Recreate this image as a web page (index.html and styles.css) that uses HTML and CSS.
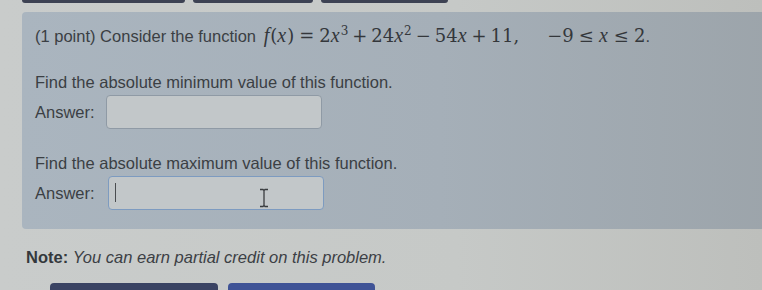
FILE: index.html
```html
<!DOCTYPE html>
<html>
<head>
    <title>Problem</title>
    <link rel="stylesheet" href="styles.css">
</head>
<body>
    <div class="tabs">
        <div class="tab tab-1"></div>
        <div class="tab tab-2"></div>
        <div class="tab tab-3"></div>
    </div>

    <div class="problem">
        <p class="intro">(1 point) Consider the function
            <span class="math"><i>f</i>(<i>x</i>)<span class="rel">=</span>2<i>x</i><sup>3</sup><span class="op">+</span>24<i>x</i><sup>2</sup><span class="op">−</span>54<i>x</i><span class="op">+</span>11,<span class="qquad"></span>−9<span class="rel">≤</span><i>x</i><span class="rel">≤</span>2</span>.</p>

        <p class="question">Find the absolute minimum value of this function.</p>
        <div class="answer">
            <span class="label">Answer:</span>
            <div class="field"></div>
        </div>

        <p class="question q2">Find the absolute maximum value of this function.</p>
        <div class="answer">
            <span class="label">Answer:</span>
            <div class="field focused">
                <span class="caret"></span>
                <svg class="ibeam" width="10" height="20" viewBox="0 0 10 20">
                    <path d="M1 1.5h3l1 1 1-1h3M5 2.5v15M1 18.5h3l1-1 1 1h3" fill="none" stroke="#3a3d40" stroke-width="1.3"/>
                </svg>
            </div>
        </div>
    </div>

    <p class="note"><b>Note:</b> <i>You can earn partial credit on this problem.</i></p>

    <div class="buttons">
        <div class="btn btn-dark"></div>
        <div class="btn btn-blue"></div>
    </div>
</body>
</html>
```

FILE: styles.css
```css
body {
    margin: 0;
    width: 762px;
    height: 290px;
    overflow: hidden;
    background: linear-gradient(90deg, #c9cccb, #c6c9c7 60%, #bdbfbc);
    font-family: "Liberation Sans", Arial, sans-serif;
    font-size: 16.5px;
    color: #3b3f44;
}
.tabs {
    display: flex;
    gap: 8px;
    padding-left: 22px;
    height: 3px;
}
.tab {
    height: 3px;
    background: #3d4253;
    border-radius: 0 0 3px 3px;
}
.tab-1 { width: 163px; }
.tab-2 { width: 120px; }
.tab-3 { width: 127px; }

.problem {
    margin: 9px -20px 0 22px;
    padding: 14px 13px 19px;
    background: linear-gradient(90deg, #aab5bf, #a5afb8 55%, #9ca4aa);
    border-radius: 4px 0 0 4px;
}
.problem p {
    margin: 0;
    line-height: 20px;
}
.math {
    font-family: "DejaVu Serif", "Liberation Serif", serif;
    font-size: 18px;
    line-height: 0;
    color: #34373b;
    margin-left: 3px;
}
.math i {
    font-family: "Liberation Serif", serif;
    font-size: 20px;
    margin-right: 1px;
}
.math sup {
    font-size: 12px;
    line-height: 0;
}
.op {
    margin: 0 0.22em;
}
.rel {
    margin: 0 0.28em;
}
.qquad {
    display: inline-block;
    width: 28px;
}
.question {
    margin-top: 26px !important;
}
.question.q2 {
    margin-top: 24px !important;
}
.answer {
    display: flex;
    align-items: center;
    gap: 11px;
    margin-top: 3px;
}
.field {
    position: relative;
    width: 214px;
    height: 32px;
    background: #c2c7c9;
    border: 1px solid #8f9aa5;
    border-radius: 4px;
}
.field.focused {
    border-color: #7d9bc0;
    margin-left: 2px;
}
.caret {
    position: absolute;
    left: 6px;
    top: 6px;
    width: 1px;
    height: 19px;
    background: #4a4d50;
}
.ibeam {
    position: absolute;
    left: 150px;
    top: 11px;
}
.note {
    margin: 18px 0 0 26px;
    line-height: 20px;
    color: #34383c;
}
.note i {
    color: #3c4045;
}
.buttons {
    display: flex;
    gap: 10px;
    margin: 16px 0 0 50px;
}
.btn {
    height: 12px;
    border-radius: 4px;
}
.btn-dark {
    width: 168px;
    background: #3a4363;
}
.btn-blue {
    width: 147px;
    background: #3f5396;
}
```
